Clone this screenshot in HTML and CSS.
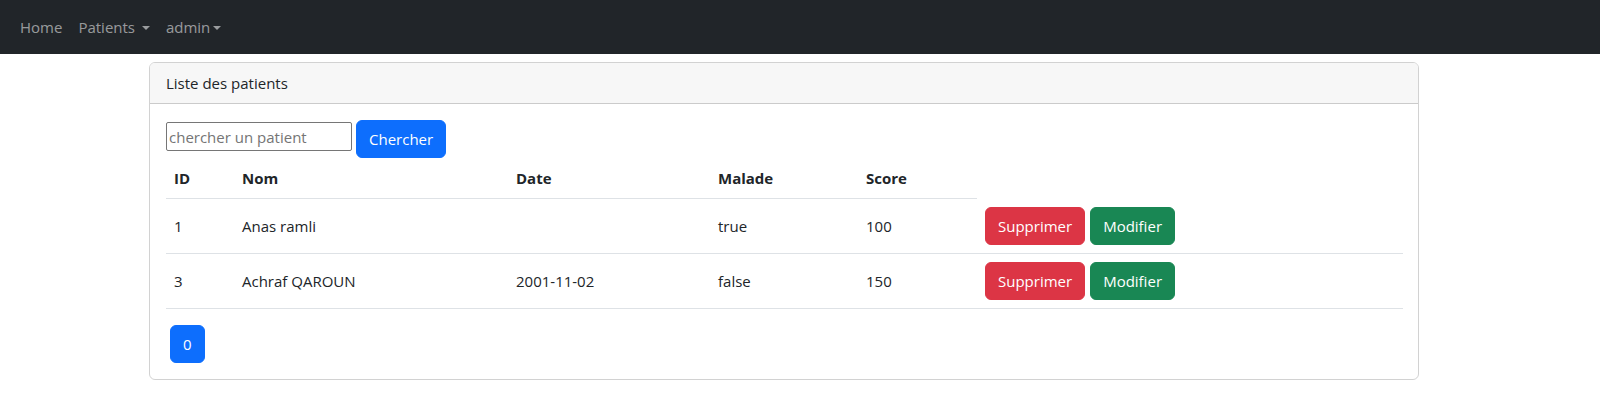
FILE: index.html
```html
<!DOCTYPE html>
<html lang="fr">
<head>
  <meta charset="UTF-8" />
  <title>Patients</title>
  <link rel="stylesheet" href="styles.css">
</head>
<body>
  <nav class="navbar">
    <ul class="nav">
      <li><a class="nav-link" href="#">Home</a></li>
      <li><a class="nav-link dropdown-toggle" href="#">Patients&nbsp;</a></li>
      <li><a class="nav-link dropdown-toggle" href="#">admin</a></li>
    </ul>
  </nav>

  <div class="page">
    <div class="card">
      <div class="card-header">Liste des patients</div>
      <div class="card-body">
        <form class="search">
          <input type="text" class="search-input" placeholder="chercher un patient">
          <button type="button" class="btn btn-primary">Chercher</button>
        </form>

        <table class="table">
          <thead>
            <tr>
              <th class="col-id">ID</th>
              <th class="col-nom">Nom</th>
              <th class="col-date">Date</th>
              <th class="col-malade">Malade</th>
              <th class="col-score">Score</th>
            </tr>
          </thead>
          <tbody>
            <tr>
              <td>1</td>
              <td>Anas ramli</td>
              <td></td>
              <td>true</td>
              <td>100</td>
              <td class="actions">
                <div class="actions-row">
                  <a class="btn btn-danger" href="#">Supprimer</a>
                  <a class="btn btn-success" href="#">Modifier</a>
                </div>
              </td>
            </tr>
            <tr>
              <td>3</td>
              <td>Achraf QAROUN</td>
              <td>2001-11-02</td>
              <td>false</td>
              <td>150</td>
              <td class="actions">
                <div class="actions-row">
                  <a class="btn btn-danger" href="#">Supprimer</a>
                  <a class="btn btn-success" href="#">Modifier</a>
                </div>
              </td>
            </tr>
          </tbody>
        </table>

        <ul class="pagination">
          <li><a class="btn btn-primary" href="#">0</a></li>
        </ul>
      </div>
    </div>
  </div>
</body>
</html>
```
FILE: styles.css
```css
html, body {
  margin: 0;
  padding: 0;
  background: #fff;
  font-family: "Segoe UI", "Open Sans", Lato, sans-serif;
  font-size: 15px;
  line-height: 24px;
  color: #212529;
}
a { text-decoration: none; }

/* barre de navigation */
.navbar {
  background: #212529;
  padding: 7px 12px;
}
.nav {
  display: flex;
  margin: 0;
  padding: 0;
  list-style: none;
}
.nav-link {
  display: block;
  padding: 8px;
  color: rgba(255,255,255,0.55);
}
.dropdown-toggle::after {
  content: "";
  display: inline-block;
  margin-left: 3px;
  vertical-align: 3px;
  border-top: 4px solid;
  border-left: 4px solid transparent;
  border-right: 4px solid transparent;
}

/* carte */
.page {
  padding: 8px 0 0 149px;
}
.card {
  width: 1268px;
  border: 1px solid rgba(0,0,0,0.175);
  border-radius: 6px;
  overflow: hidden;
}
.card-header {
  padding: 8px 16px;
  background: #f7f7f7;
  border-bottom: 1px solid rgba(0,0,0,0.175);
}
.card-body {
  padding: 16px;
}

/* recherche */
.search {
  display: flex;
  align-items: flex-start;
  gap: 4px;
}
.search-input {
  margin-top: 2px;
  width: 186px;
  height: 29px;
  padding: 1px 2px;
  border: 1px solid #767676;
  border-radius: 2px;
  font: inherit;
  color: #212529;
  box-sizing: border-box;
}
.search-input::placeholder { color: #757575; }

/* boutons */
.btn {
  display: inline-block;
  padding: 6px 12px;
  font: inherit;
  line-height: 24px;
  border: 1px solid transparent;
  border-radius: 6px;
  color: #fff;
  cursor: pointer;
}
.btn-primary { background: #0d6efd; border-color: #0d6efd; }
.btn-danger  { background: #dc3545; border-color: #dc3545; }
.btn-success { background: #198754; border-color: #198754; }

/* tableau */
.table {
  width: 1237px;
  border-collapse: collapse;
  margin-bottom: 16px;
  vertical-align: top;
}
.table th, .table td {
  padding: 8px;
  text-align: left;
  border-bottom: 1px solid #dee2e6;
}
.table th { font-weight: bold; vertical-align: bottom; }
.col-id     { width: 52px; }
.col-nom    { width: 258px; }
.col-date   { width: 186px; }
.col-malade { width: 132px; }
.col-score  { width: 103px; }
.actions-row {
  display: flex;
  gap: 5px;
}

/* pagination */
.pagination {
  display: flex;
  margin: 0;
  padding: 0;
  list-style: none;
}
.pagination .btn {
  margin-left: 4px;
}
```
